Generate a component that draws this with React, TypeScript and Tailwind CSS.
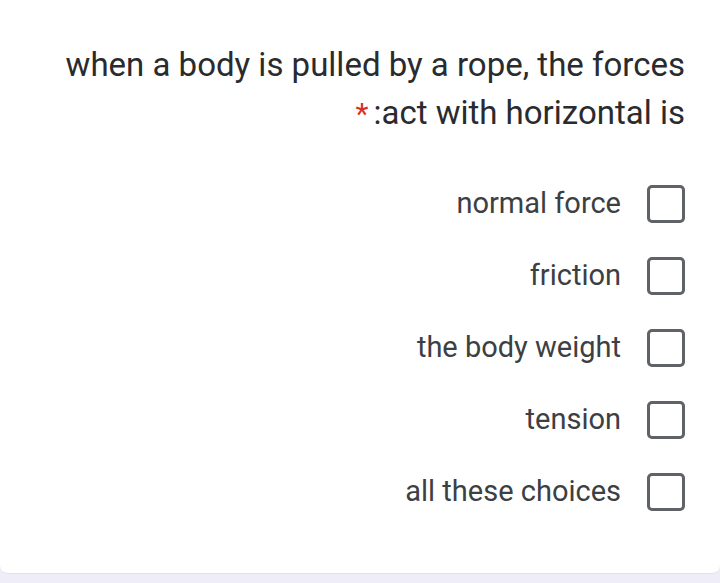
import React from "react";

const options = ["normal force", "friction", "the body weight", "tension", "all these choices"];

export default function App() {
  return (
    <div className="w-[720px] h-[583px] bg-[#efedf8] overflow-hidden" style={{ fontFamily: "Roboto, 'Liberation Sans', sans-serif" }}>
      <div className="h-[574px] bg-white rounded-b-[8px] border-b border-[#e2e0ea] flex flex-col">
        <div className="pt-[41px] pr-[35px] text-right text-[33px] leading-[48px] text-[#2a2b2e] whitespace-nowrap">
          <div>when a body is pulled by a rope, the forces</div>
          <div>
            <span className="text-[#d93025] text-[30px] mr-[5px]">*</span>:act with horizontal is
          </div>
        </div>
        <div className="mt-[30px] flex flex-col pr-[35px]">
          {options.map((o) => (
            <div key={o} className="h-[72px] flex items-center justify-end gap-[26px]">
              <span className="text-[29px] text-[#3c4043]">{o}</span>
              <span className="w-[38px] h-[38px] border-[3px] border-[#5f6368] rounded-[5px] box-border" />
            </div>
          ))}
        </div>
      </div>
    </div>
  );
}
